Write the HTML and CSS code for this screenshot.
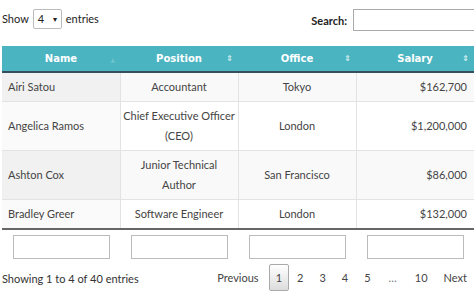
FILE: index.html
```html
<!DOCTYPE html>
<html lang="en">
<head>
    <meta charset="UTF-8">
    <title>Employees</title>
    <link rel="stylesheet" href="styles.css">
</head>
<body>
    <div class="wrapper">
        <div class="top-bar">
            <label class="length">Show
                <span class="select">4 <span class="caret">&#9662;</span></span>
                entries</label>
            <label class="filter">Search: <span class="search-box"></span></label>
        </div>

        <table class="data-table">
            <thead>
                <tr>
                    <th class="sorted">Name <span class="sort">&#9650;</span></th>
                    <th>Position <span class="sort">&#8661;</span></th>
                    <th>Office <span class="sort">&#8661;</span></th>
                    <th>Salary <span class="sort">&#8661;</span></th>
                </tr>
            </thead>
            <tbody>
                <tr class="odd">
                    <td class="name">Airi Satou</td>
                    <td>Accountant</td>
                    <td>Tokyo</td>
                    <td class="num">$162,700</td>
                </tr>
                <tr>
                    <td class="name">Angelica Ramos</td>
                    <td>Chief Executive Officer<br>(CEO)</td>
                    <td>London</td>
                    <td class="num">$1,200,000</td>
                </tr>
                <tr class="odd">
                    <td class="name">Ashton Cox</td>
                    <td>Junior Technical<br>Author</td>
                    <td>San Francisco</td>
                    <td class="num">$86,000</td>
                </tr>
                <tr>
                    <td class="name">Bradley Greer</td>
                    <td>Software Engineer</td>
                    <td>London</td>
                    <td class="num">$132,000</td>
                </tr>
            </tbody>
            <tfoot>
                <tr>
                    <td><span class="col-filter"></span></td>
                    <td><span class="col-filter"></span></td>
                    <td><span class="col-filter"></span></td>
                    <td><span class="col-filter"></span></td>
                </tr>
            </tfoot>
        </table>

        <div class="bottom-bar">
            <div class="info">Showing 1 to 4 of 40 entries</div>
            <div class="paging">
                <a href="#">Previous</a>
                <a href="#" class="current">1</a>
                <a href="#">2</a>
                <a href="#">3</a>
                <a href="#">4</a>
                <a href="#">5</a>
                <span class="dots">…</span>
                <a href="#">10</a>
                <a href="#">Next</a>
            </div>
        </div>
    </div>
</body>
</html>
```

FILE: styles.css
```css
* {
    margin: 0;
    padding: 0;
    box-sizing: border-box;
}

body {
    background-color: #fff;
    color: #333;
    font-family: Lato, "Open Sans", Arial, sans-serif;
    font-size: 11px;
    overflow: hidden;
}

.wrapper {
    width: 480px;
    padding-left: 2px;
}

.top-bar {
    display: flex;
    justify-content: space-between;
    align-items: center;
    height: 46px;
    padding-bottom: 2px;
}

.length {
    display: flex;
    align-items: center;
    gap: 4px;
    margin-top: -7px;
    color: #222;
}

.select {
    display: inline-flex;
    justify-content: space-between;
    align-items: center;
    width: 29px;
    height: 20px;
    padding: 0 4px;
    border: 1px solid #bbb;
    border-radius: 2px;
    background: #fff;
    font-size: 11px;
}

.caret {
    font-size: 8px;
}

.filter {
    display: flex;
    align-items: center;
    gap: 6px;
    margin-top: -4px;
    margin-right: -8px;
    color: #222;
    font-weight: bold;
}

.search-box {
    display: inline-block;
    width: 135px;
    height: 22px;
    border: 1px solid #aaa;
    background: #fff;
}

.data-table {
    width: 472px;
    border-collapse: collapse;
    table-layout: fixed;
}

.data-table th {
    height: 26px;
    background: #4bb4c1;
    color: #fff;
    font-family: "DejaVu Sans", "Open Sans", sans-serif;
    font-size: 10px;
    font-weight: bold;
    text-align: center;
    border-bottom: 2px solid #35505a;
    position: relative;
}

.data-table th .sort {
    position: absolute;
    right: 5px;
    top: 8px;
    font-size: 8px;
    color: #d6f0f3;
}

.data-table th.sorted .sort {
    color: #6cc3cd;
    font-size: 6px;
    top: 10px;
}

.data-table tbody td {
    padding: 4px 2px;
    line-height: 20px;
    text-align: center;
    white-space: nowrap;
    border-top: 1px solid #e3e3e3;
    border-left: 1px solid #e3e3e3;
    color: #444;
}

.data-table tbody tr:first-child td {
    border-top: none;
}

.data-table tbody td:first-child {
    border-left: none;
}

.data-table tbody td.name {
    text-align: left;
    padding-left: 6px;
    background: #fafafa;
}

.data-table tbody td.num {
    text-align: right;
    padding-right: 7px;
}

.data-table tbody tr.odd td {
    background: #f9f9f9;
}

.data-table tbody tr.odd td.name {
    background: #f1f1f1;
}

.data-table tbody tr:last-child td {
    border-bottom: 2px solid #666;
}

.data-table tfoot td {
    padding: 5px 10px 0 11px;
}

.col-filter {
    display: block;
    height: 24px;
    border: 1px solid #bbb;
    background: #fff;
}

.bottom-bar {
    display: flex;
    justify-content: space-between;
    align-items: center;
    margin-top: 5px;
    width: 473px;
}

.info {
    color: #333;
    margin-top: 2px;
}

.paging {
    display: flex;
    align-items: center;
}

.paging a,
.paging .dots {
    display: inline-block;
    padding: 0 8px;
    height: 26px;
    line-height: 26px;
    color: #444;
    text-decoration: none;
    font-size: 11px;
}

.paging a:first-child {
    margin-right: 2px;
}

.paging .current {
    padding: 0 6px;
    border: 1px solid #aaa;
    border-radius: 2px;
    background: linear-gradient(#fff, #dcdcdc);
    height: 27px;
}

.paging .dots {
    padding: 0 10px;
    color: #777;
}
```
